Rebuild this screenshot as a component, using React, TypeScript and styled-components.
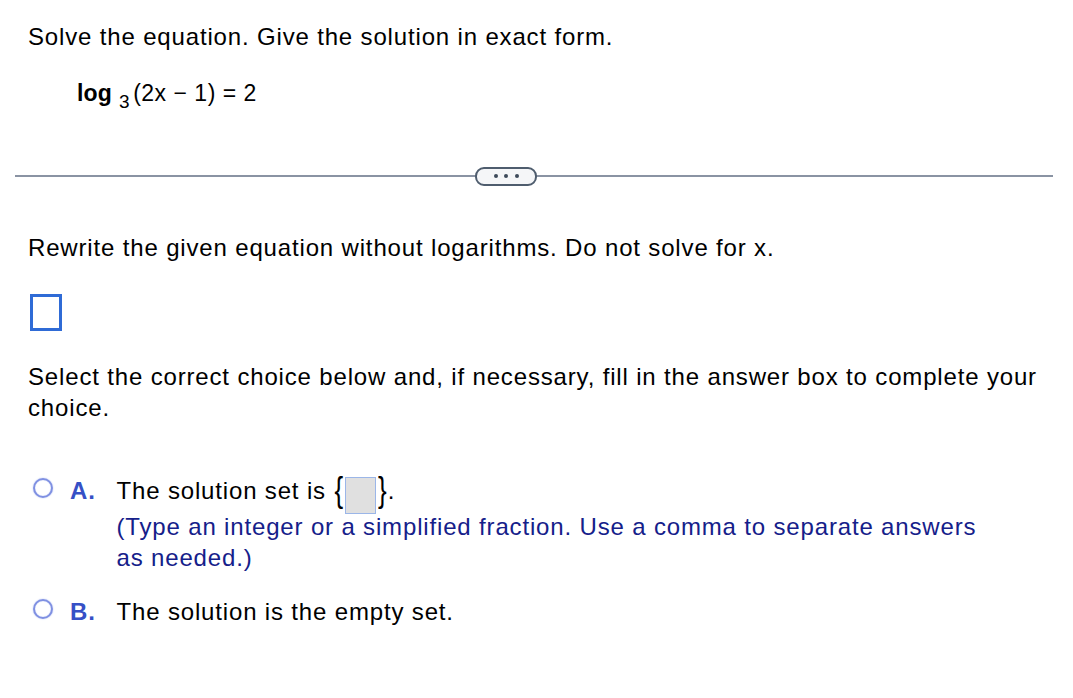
import React from 'react';
import styled, { createGlobalStyle } from 'styled-components';

const GlobalStyle = createGlobalStyle`
  body {
    margin: 0;
    background: #ffffff;
    font-family: "Liberation Sans", Arial, sans-serif;
    color: #000000;
  }
`;

const Page = styled.div`
  padding-top: 21px;
  font-size: 24px;
  line-height: 31px;
  letter-spacing: 0.84px;
`;

const Text = styled.div<{ top?: number }>`
  padding-left: 28px;
  padding-right: 20px;
  margin-top: ${p => p.top || 0}px;
`;

const Equation = styled.div`
  padding-left: 77px;
  margin-top: 26px;
  font-size: 23px;
  letter-spacing: 0.5px;
`;

const Log = styled.span`
  font-weight: bold;
  letter-spacing: 0.2px;
`;

const Sub = styled.span`
  font-size: 19px;
  position: relative;
  top: 7px;
  margin: 0 3px 0 7px;
`;

const Divider = styled.div`
  margin: 56px 20px 0 15px;
  height: 20px;
  display: flex;
  align-items: center;
  position: relative;

  &::before {
    content: '';
    position: absolute;
    left: 0;
    right: 0;
    top: 9px;
    height: 2px;
    background: #8a93a3;
  }
`;

const MorePill = styled.div`
  position: relative;
  width: 58px;
  height: 15px;
  border: 2px solid #4f5d6e;
  border-radius: 9px;
  background: #f5f6f8;
  display: flex;
  align-items: center;
  justify-content: center;
  gap: 6.5px;
  margin-left: 460px;
`;

const Dot = styled.span`
  width: 4px;
  height: 4px;
  border-radius: 50%;
  background: #3d4a5a;
`;

const AnswerBox = styled.div`
  margin: 31px 0 0 30px;
  width: 26px;
  height: 31px;
  border: 3px solid #2f6bd6;
`;

const Options = styled.div`
  margin-top: 52px;
  display: flex;
  flex-direction: column;
  gap: 23px;
`;

const Option = styled.div`
  display: flex;
  align-items: flex-start;
  padding-left: 33px;
`;

const Radio = styled.span`
  width: 16px;
  height: 16px;
  border: 2px solid #7f90e2;
  border-radius: 50%;
  margin-top: 3px;
  flex-shrink: 0;
  box-shadow: 0 0 1.5px #a9b7ef, inset 0 0 1px #a9b7ef;
`;

const Letter = styled.span`
  font-weight: bold;
  color: #3650c6;
  width: 46.5px;
  margin-left: 17px;
  flex-shrink: 0;
  letter-spacing: 1px;
`;

const Body = styled.div`
  max-width: 880px;
`;

const Hint = styled.div`
  color: #15208a;
  margin-top: 1px;
`;

const Brace = styled.span`
  display: inline-block;
  font-size: 26px;
  line-height: 31px;
  transform: scaleY(1.35);
  letter-spacing: 0;
  margin: 0 1px;
`;

const Blank = styled.span`
  display: inline-block;
  width: 29px;
  height: 35px;
  background: #e0e0e0;
  border: 1.5px solid #9bb6e8;
  vertical-align: -11px;
  margin: -4px 1px -4px 1px;
`;

export default function App() {
  return (
    <>
      <GlobalStyle />
      <Page>
        <Text>Solve the equation. Give the solution in exact form.</Text>
        <Equation>
          <Log>log</Log>
          <Sub>3</Sub>(2x − 1) = 2
        </Equation>
        <Divider>
          <MorePill>
            <Dot />
            <Dot />
            <Dot />
          </MorePill>
        </Divider>
        <Text top={46}>Rewrite the given equation without logarithms. Do not solve for x.</Text>
        <AnswerBox />
        <Text top={29.5}>
          Select the correct choice below and, if necessary, fill in the answer box to complete your choice.
        </Text>
        <Options>
          <Option>
            <Radio />
            <Letter>A.</Letter>
            <Body>
              <div>
                The solution set is <Brace>{'{'}</Brace>
                <Blank />
                <Brace>{'}'}</Brace>.
              </div>
              <Hint>
                (Type an integer or a simplified fraction. Use a comma to separate answers as needed.)
              </Hint>
            </Body>
          </Option>
          <Option>
            <Radio />
            <Letter>B.</Letter>
            <Body>The solution is the empty set.</Body>
          </Option>
        </Options>
      </Page>
    </>
  );
}
